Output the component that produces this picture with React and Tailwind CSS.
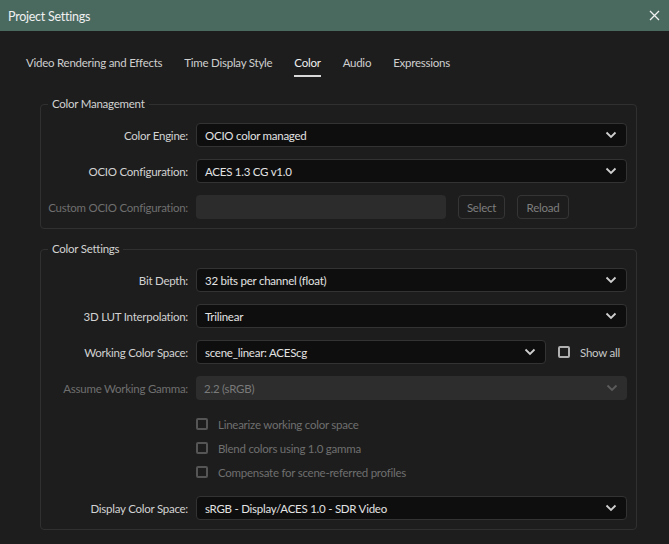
import React from 'react';

function Chevron({ disabled }) {
  return (
    <svg width="12" height="8" viewBox="0 0 12 8" className="shrink-0">
      <path
        d="M1.5 1.5 L6 6 L10.5 1.5"
        fill="none"
        stroke={disabled ? '#5c5c5c' : '#cfcfcf'}
        strokeWidth="1.8"
      />
    </svg>
  );
}

function Dropdown({ value, disabled, className = '' }) {
  return (
    <div
      className={
        'flex h-6 items-center justify-between rounded pl-2 pr-[9px] ' +
        (disabled
          ? 'bg-[#2d2d2d] text-[#7a7a7a] '
          : 'border border-[#333333] bg-[#0e0e0e] text-[#e3e3e3] ') +
        className
      }
    >
      <span className="whitespace-nowrap">{value}</span>
      <Chevron disabled={disabled} />
    </div>
  );
}

function Row({ label, disabled, children }) {
  return (
    <div className="flex h-6 items-center">
      <div
        className={
          'w-[147px] shrink-0 whitespace-nowrap text-right ' +
          (disabled ? 'text-[#6f6f6f]' : 'text-[#d2d2d2]')
        }
      >
        {label}
      </div>
      <div className="ml-2 flex flex-1 items-center">{children}</div>
    </div>
  );
}

function Checkbox({ label, disabled }) {
  return (
    <div className="flex h-6 items-center gap-[10px]">
      <span
        className={
          'h-[12px] w-[12px] rounded-[2px] border-2 ' +
          (disabled ? 'border-[#555555]' : 'border-[#b0b0b0]')
        }
      />
      <span className={disabled ? 'text-[#6f6f6f]' : 'text-[#c8c8c8]'}>{label}</span>
    </div>
  );
}

function Group({ title, children }) {
  return (
    <fieldset className="rounded border border-[#303030] pb-[9px] pr-[9px]">
      <legend className="ml-[7px] px-1 leading-4 text-[#d2d2d2]">{title}</legend>
      <div className="mt-[11px] flex flex-col">{children}</div>
    </fieldset>
  );
}

export default function App() {
  const tabs = ['Video Rendering and Effects', 'Time Display Style', 'Color', 'Audio', 'Expressions'];

  return (
    <div
      className="flex h-[544px] w-[669px] flex-col bg-[#1d1d1d] text-[11.5px] tracking-[-0.25px]"
      style={{ fontFamily: 'Lato, "Noto Sans", sans-serif' }}
    >
      <div className="flex h-[31px] shrink-0 items-center justify-between bg-[#4a6a60] pl-2 pr-[9px] pt-[3px]">
        <span className="text-[12.5px] text-[#f0f0f0]">Project Settings</span>
        <svg width="11" height="11" viewBox="0 0 11 11" className="-mt-[3px]">
          <path d="M1 1 L10 10 M10 1 L1 10" stroke="#f0f0f0" strokeWidth="1.3" />
        </svg>
      </div>

      <div className="flex gap-[22px] pl-[26px] pt-[23px]">
        {tabs.map((t) => (
          <div key={t} className="flex flex-col items-center">
            <span className={t === 'Color' ? 'text-[#f0f0f0]' : 'text-[#cfcfcf]'}>{t}</span>
            <span
              className={
                'mt-[4px] h-[2px] w-full ' + (t === 'Color' ? 'bg-[#d8d8d8]' : 'bg-transparent')
              }
            />
          </div>
        ))}
      </div>

      <div className="flex flex-col gap-3 pl-10 pr-8 pt-[19px]">
        <Group title="Color Management">
          <div className="flex flex-col gap-3">
            <Row label="Color Engine:">
              <Dropdown value="OCIO color managed" className="flex-1" />
            </Row>
            <Row label="OCIO Configuration:">
              <Dropdown value="ACES 1.3 CG v1.0" className="flex-1" />
            </Row>
            <Row label="Custom OCIO Configuration:" disabled>
              <div className="h-6 w-[250px] rounded bg-[#2c2c2c]" />
              <button className="ml-[12px] h-6 w-[47px] rounded border border-[#353535] text-[#7e7e7e]">
                Select
              </button>
              <button className="ml-[12px] h-6 w-[52px] rounded border border-[#353535] text-[#7e7e7e]">
                Reload
              </button>
            </Row>
          </div>
        </Group>

        <Group title="Color Settings">
          <div className="flex flex-col gap-3">
            <Row label="Bit Depth:">
              <Dropdown value="32 bits per channel (float)" className="flex-1" />
            </Row>
            <Row label="3D LUT Interpolation:">
              <Dropdown value="Trilinear" className="flex-1" />
            </Row>
            <Row label="Working Color Space:">
              <Dropdown value="scene_linear: ACEScg" className="w-[350px]" />
              <div className="ml-3">
                <Checkbox label="Show all" />
              </div>
            </Row>
            <Row label="Assume Working Gamma:" disabled>
              <Dropdown value="2.2 (sRGB)" disabled className="flex-1" />
            </Row>
            <div className="ml-[155px] flex flex-col">
              <Checkbox label="Linearize working color space" disabled />
              <Checkbox label="Blend colors using 1.0 gamma" disabled />
              <Checkbox label="Compensate for scene-referred profiles" disabled />
            </div>
            <Row label="Display Color Space:">
              <Dropdown value="sRGB - Display/ACES 1.0 - SDR Video" className="flex-1" />
            </Row>
          </div>
        </Group>
      </div>
    </div>
  );
}
